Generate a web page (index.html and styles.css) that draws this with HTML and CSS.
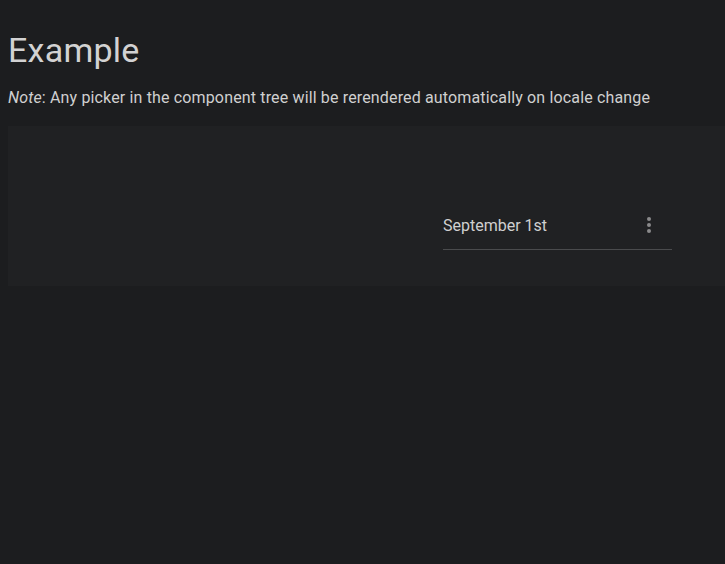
FILE: index.html
```html
<!DOCTYPE html>
<html>
<head>
<meta charset="utf-8">
<link rel="stylesheet" href="styles.css">
</head>
<body>
<div class="page">
  <h1 class="title">Example</h1>
  <p class="note"><em>Note</em>: Any picker in the component tree will be rerendered automatically on locale change</p>
  <div class="panel">
    <div class="field">
      <span class="value">September 1st</span>
      <svg class="more" viewBox="0 0 24 24" width="24" height="24" aria-hidden="true">
        <circle cx="12" cy="6" r="2"/>
        <circle cx="12" cy="12" r="2"/>
        <circle cx="12" cy="18" r="2"/>
      </svg>
    </div>
  </div>
</div>
</body>
</html>
```
FILE: styles.css
```css
html, body {
  margin: 0;
  padding: 0;
  background: #1c1d1f;
  height: 100%;
  overflow: hidden;
}
body {
  font-family: Roboto, "Liberation Sans", sans-serif;
  color: #d0d0d0;
}
.page {
  padding-left: 8px;
}
.title {
  margin: 29px 0 0 0;
  font-size: 34px;
  font-weight: 400;
  line-height: 42px;
  letter-spacing: 0.25px;
  color: #d2d2d2;
}
.note {
  margin: 15px 0 0 0;
  font-size: 16px;
  line-height: 24px;
  letter-spacing: 0.15px;
  color: #d0d0d0;
}
.panel {
  margin-top: 16px;
  height: 160px;
  background: #202123;
  display: flex;
  justify-content: flex-end;
  align-items: flex-start;
  padding-right: 53px;
  box-sizing: border-box;
}
.field {
  margin-top: 87px;
  width: 229px;
  display: flex;
  align-items: center;
  justify-content: space-between;
  padding-bottom: 12px;
  border-bottom: 1px solid #4a4b4d;
}
.value {
  font-size: 16px;
  line-height: 23px;
  color: #d0d0d0;
}
.more {
  fill: #8a8a8b;
  margin-right: 11px;
}
```
